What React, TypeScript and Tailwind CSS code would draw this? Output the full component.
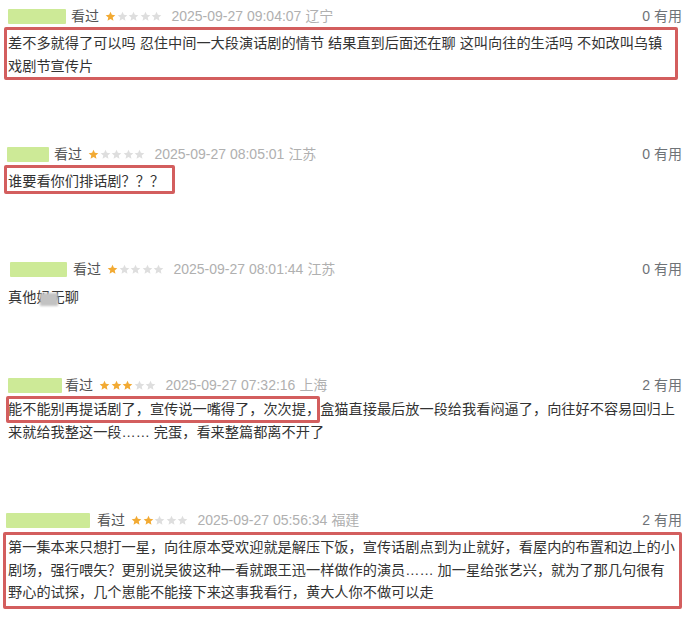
import type { ReactNode } from 'react';

interface Review {
  barWidth: number;
  barClass: string;
  stars: number;
  time: string;
  region: string;
  useful: number;
  contentClass: string;
  body: ReactNode;
  boxClass?: string;
}

const reviews: Review[] = [
  {
    barWidth: 58,
    barClass: 'ml-0 mr-[5px]',
    stars: 1,
    time: '2025-09-27 09:04:07',
    region: '辽宁',
    useful: 0,
    contentClass: 'mt-[5px]',
    boxClass: 'top-[-5px] bottom-[-3px] left-[-4px] right-[4px]',
    body: (
      <>
        差不多就得了可以吗 忍住中间一大段演话剧的情节 结果直到后面还在聊 这叫向往的生活吗 不如改叫乌镇
        <br />
        戏剧节宣传片
      </>
    ),
  },
  {
    barWidth: 42,
    barClass: 'ml-[-1px] mr-[5px]',
    stars: 1,
    time: '2025-09-27 08:05:01',
    region: '江苏',
    useful: 0,
    contentClass: 'mt-[5px]',
    boxClass: 'top-[-5px] bottom-[-1px] left-[-4px] w-[171px]',
    body: <>谁要看你们排话剧？？？</>,
  },
  {
    barWidth: 57,
    barClass: 'ml-[2px] mr-[6px]',
    stars: 1,
    time: '2025-09-27 08:01:44',
    region: '江苏',
    useful: 0,
    contentClass: 'mt-[5px]',
    body: (
      <>
        真他
        <span className="relative">
          妈无
          <span className="absolute left-[4px] top-[4px] h-[13px] w-[18px] bg-[#c2c2c2] blur-[0.8px]" />
        </span>
        聊
      </>
    ),
  },
  {
    barWidth: 54,
    barClass: 'ml-0 mr-[3px]',
    stars: 3,
    time: '2025-09-27 07:32:16',
    region: '上海',
    useful: 2,
    contentClass: 'mt-[2px]',
    boxClass: 'top-[-2px] h-[27px] left-[-2px] w-[314px]',
    body: (
      <>
        能不能别再提话剧了，宣传说一嘴得了，次次提，盒猫直接最后放一段给我看闷逼了，向往好不容易回归上
        <br />
        来就给我整这一段…… 完蛋，看来整篇都离不开了
      </>
    ),
  },
  {
    barWidth: 84,
    barClass: 'ml-[-2px] mr-[7px]',
    stars: 2,
    time: '2025-09-27 05:56:34',
    region: '福建',
    useful: 2,
    contentClass: 'mt-[5px]',
    boxClass: 'top-[-4px] bottom-[-5px] left-[-5px] right-0',
    body: (
      <>
        第一集本来只想打一星，向往原本受欢迎就是解压下饭，宣传话剧点到为止就好，看屋内的布置和边上的小
        <br />
        剧场，强行喂矢？更别说吴彼这种一看就跟王迅一样做作的演员…… 加一星给张艺兴，就为了那几句很有
        <br />
        野心的试探，几个崽能不能接下来这事我看行，黄大人你不做可以走
      </>
    ),
  },
];

function Stars({ count }: { count: number }) {
  return (
    <span className="flex items-center gap-[0.6px]">
      {[0, 1, 2, 3, 4].map((i) => (
        <svg key={i} width="11" height="11" viewBox="0 0 24 24">
          <polygon
            points="12,1.5 15,8.4 22.5,9.1 16.8,14.1 18.5,21.5 12,17.6 5.5,21.5 7.2,14.1 1.5,9.1 9,8.4"
            fill={i < count ? '#f2aa33' : '#dedede'}
          />
        </svg>
      ))}
    </span>
  );
}

function ReviewItem({ review }: { review: Review }) {
  return (
    <div className="pb-[66px]">
      <div className="flex h-[22px] items-center justify-between text-[14px]">
        <div className="flex items-center">
          <span
            className={`h-[15px] rounded-[1px] bg-[#cdea97] blur-[0.4px] ${review.barClass}`}
            style={{ width: review.barWidth }}
          />
          <span className="mr-[6px] text-[#555]">看过</span>
          <Stars count={review.stars} />
          <span className="ml-[9px] text-[#b0b0b0]">{review.time}</span>
          <span className="ml-[4px] text-[#b0b0b0]">{review.region}</span>
        </div>
        <span className="text-[#6f7377]">
          {review.useful} 有用
        </span>
      </div>
      <div className={`relative text-[14.2px] leading-[22.5px] text-[#333] ${review.contentClass}`}>
        {review.body}
        {review.boxClass && (
          <div
            className={`pointer-events-none absolute rounded-[2px] border-[3px] border-[#d35e5e] ${review.boxClass}`}
          />
        )}
      </div>
    </div>
  );
}

export default function App() {
  return (
    <div
      className="h-[620px] overflow-hidden bg-white pl-[8px] pr-[6px] pt-[5px]"
      style={{ fontFamily: '"Liberation Sans", "Noto Sans CJK SC", sans-serif' }}
    >
      {reviews.map((r, i) => (
        <ReviewItem key={i} review={r} />
      ))}
    </div>
  );
}
